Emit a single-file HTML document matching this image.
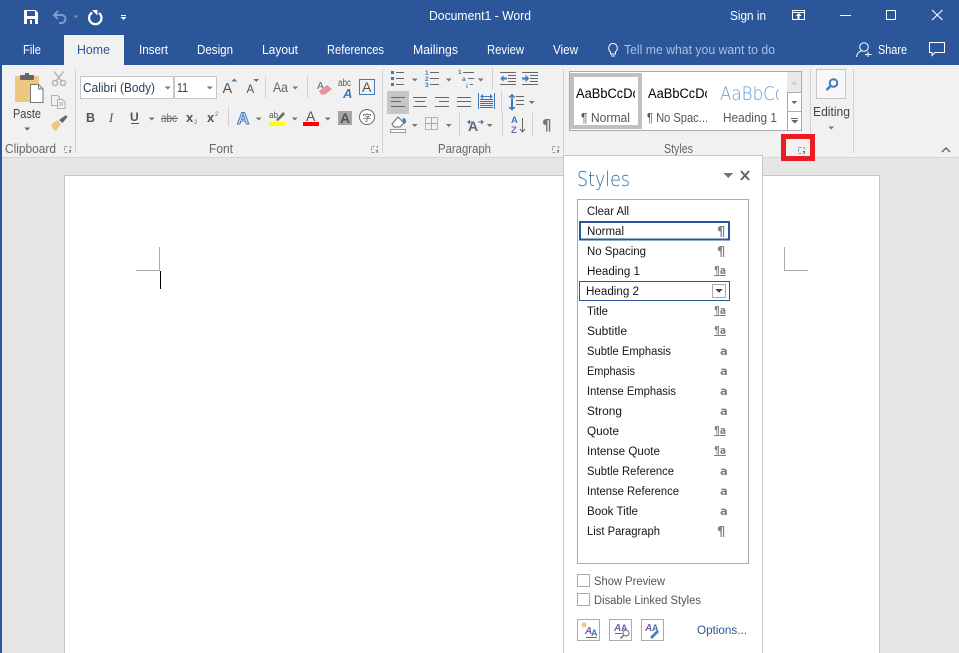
<!DOCTYPE html>
<html><head><meta charset="utf-8"><title>Document1 - Word</title>
<style>
html,body{margin:0;padding:0;width:959px;height:653px;overflow:hidden;background:#e6e6e6}
svg{display:block;position:absolute;left:0;top:0}
text{font-family:"Liberation Sans","DejaVu Sans",sans-serif;font-size:12.5px;fill:#444;white-space:pre}
.w{fill:#fff}.r{fill:#666}.s{fill:#14141f;font-size:11.5px}
.tab{font-size:13px}
.p{fill:#808080;font-size:13px;font-weight:bold;font-family:"DejaVu Sans",sans-serif}
.m{fill:#808080;font-size:11.5px;font-weight:bold;font-family:"DejaVu Sans",sans-serif}
.pa{fill:#808080;font-size:11px;font-weight:bold;font-family:"DejaVu Sans",sans-serif}
</style></head><body>
<svg width="959" height="653" viewBox="0 0 959 653" xmlns="http://www.w3.org/2000/svg" shape-rendering="crispEdges">
<!-- backgrounds -->
<rect width="959" height="653" fill="#e6e6e6"/>
<rect width="959" height="65" fill="#2b579a"/>
<rect y="65" width="2" height="588" fill="#2b579a"/>
<rect x="2" y="65" width="957" height="92" fill="#f1f1f1"/>
<rect x="2" y="157" width="957" height="1" fill="#d6d6d6"/>
<rect x="64" y="35" width="60" height="30" fill="#f1f1f1"/>
<rect x="64.500" y="175.500" width="815" height="490" fill="#fff" stroke="#c6c6c6"/>

<!-- QAT -->
<g shape-rendering="auto">
<path d="M24 10h11.500l2.500 2.500V24H24z" fill="#fff"/>
<rect x="27" y="11" width="8" height="5" fill="#2b579a"/><rect x="27" y="19" width="8" height="5" fill="#2b579a"/><rect x="30" y="20" width="2" height="4" fill="#fff"/>
<path d="M58 11l-4 4 4 4" fill="none" stroke="#7f9bc6" stroke-width="2"/><path d="M54.500 15H61c6 0 6 8 0 8h-2" fill="none" stroke="#7f9bc6" stroke-width="2"/>
<path d="M73 15.500h5.500l-2.750 3z" fill="#6f8dbd"/>
<path d="M99 13a6.200 6.200 0 1 1-6-.8" fill="none" stroke="#fff" stroke-width="2.200"/>
<path d="M90 10h6v7z" fill="#2b579a"/><path d="M93 10.500h5.500V16z" fill="#fff" transform="translate(-1 -.5)"/>
<rect x="121" y="15" width="5" height="1" fill="#fff"/><path d="M120.500 17h6l-3 3z" fill="#fff"/>
</g>
<text x="429" y="20" class="w" textLength="102" lengthAdjust="spacingAndGlyphs">Document1 - Word</text>
<text x="730" y="20" class="w" textLength="36" lengthAdjust="spacingAndGlyphs">Sign in</text>
<!-- window controls -->
<rect x="792.500" y="10.500" width="12" height="9" fill="none" stroke="#fff"/><rect x="792" y="12" width="13" height="1" fill="#fff"/><path d="M798.500 13l-3 3h2v3h2v-3h2z" fill="#fff"/>
<rect x="840" y="15" width="11" height="1" fill="#fff"/>
<rect x="886.500" y="10.500" width="9" height="9" fill="none" stroke="#fff"/>
<path d="M932 10l10.500 10M942.500 10L932 20" stroke="#fff" stroke-width="1.100" shape-rendering="auto"/>

<!-- tabs -->
<text x="23" y="54" class="w tab" textLength="18" lengthAdjust="spacingAndGlyphs">File</text>
<text x="77" y="54" class="tab" style="fill:#2b579a" textLength="33" lengthAdjust="spacingAndGlyphs">Home</text>
<text x="139" y="54" class="w tab" textLength="29" lengthAdjust="spacingAndGlyphs">Insert</text>
<text x="197" y="54" class="w tab" textLength="36" lengthAdjust="spacingAndGlyphs">Design</text>
<text x="262" y="54" class="w tab" textLength="36" lengthAdjust="spacingAndGlyphs">Layout</text>
<text x="327" y="54" class="w tab" textLength="57" lengthAdjust="spacingAndGlyphs">References</text>
<text x="413" y="54" class="w tab" textLength="45" lengthAdjust="spacingAndGlyphs">Mailings</text>
<text x="487" y="54" class="w tab" textLength="37" lengthAdjust="spacingAndGlyphs">Review</text>
<text x="553" y="54" class="w tab" textLength="25" lengthAdjust="spacingAndGlyphs">View</text>
<text x="624" y="54" class="tab" style="fill:#a9bfdf" textLength="151" lengthAdjust="spacingAndGlyphs">Tell me what you want to do</text>
<text x="878" y="54" class="w tab" textLength="29" lengthAdjust="spacingAndGlyphs">Share</text>
<g shape-rendering="auto" fill="none" stroke="#fff">
<path d="M610.500 52c-3.500-3-1.500-8.500 2.500-8.500s6 5.500 2.500 8.500v2h-5zM611 56h4"/>
<circle cx="864" cy="47" r="4.300"/><path d="M856.500 57c.5-3.500 2.500-5.500 5-6"/><path d="M868 51.500v5.500M865 54.500h6.500"/>
<path d="M929.500 42.500h15v10h-9.500l-3 3v-3h-2.500z"/>
</g>

<!-- ribbon separators -->
<g fill="#d0d0d0">
<rect x="75" y="69" width="1" height="84"/><rect x="382" y="69" width="1" height="84"/><rect x="563" y="69" width="1" height="84"/>
<rect x="810" y="69" width="1" height="84"/><rect x="853" y="69" width="1" height="84"/>
<rect x="265" y="76" width="1" height="22"/><rect x="307" y="76" width="1" height="22"/><rect x="228" y="107" width="1" height="19"/>
<rect x="492" y="68" width="1" height="22"/><rect x="501" y="91" width="1" height="22"/><rect x="459" y="113" width="1" height="23"/><rect x="502" y="113" width="1" height="23"/><rect x="532" y="113" width="1" height="23"/>
</g>

<!-- clipboard -->
<g shape-rendering="auto">
<rect x="15" y="76" width="24" height="26" rx="1" fill="#edc77f"/>
<rect x="20" y="75" width="14" height="5" rx="1" fill="#666"/><rect x="25" y="73" width="4" height="3" fill="#666"/>
<path d="M30.500 84.500h8l4.500 4.500v13.500H30.500z" fill="#fff" stroke="#777"/><path d="M38.500 84.500V89H43" fill="none" stroke="#777"/>
<circle cx="55" cy="83" r="2.600" fill="none" stroke="#b0b0b0" stroke-width="1.400"/><circle cx="63" cy="83" r="2.600" fill="none" stroke="#b0b0b0" stroke-width="1.400"/><path d="M54 71.500l7 9M63.500 71.500l-7 9" stroke="#b0b0b0" stroke-width="1.400"/>
<path d="M51.500 95.500h6l2 2v8h-8z" fill="#f1f1f1" stroke="#b0b0b0"/><path d="M57.500 99.500h5l2.500 2.500v6.500h-7.500z" fill="#f1f1f1" stroke="#b0b0b0"/><path d="M59 103h4M59 105h4" stroke="#b0b0b0"/>
<path d="M51 125l6-5 4 4-5 7c-2-.5-4-3-5-6z" fill="#edc77f"/><path d="M59 120l7-5 1.500 2-5 6z" fill="#666"/>
</g>
<text x="13" y="118" textLength="28" lengthAdjust="spacingAndGlyphs">Paste</text>
<path d="M24 127.500h6l-3 3z" fill="#666"/>
<text x="5" y="153" class="r" textLength="51" lengthAdjust="spacingAndGlyphs">Clipboard</text>
<rect x="64.500" y="146.500" width="6" height="6" fill="none" stroke="#999" stroke-dasharray="3 2"/><path d="M67 149l4 4v-3h-3z" fill="#777"/>

<!-- font row 1 -->
<rect x="80.500" y="76.500" width="93" height="22" fill="#fff" stroke="#c6c6c6"/>
<rect x="174.500" y="76.500" width="42" height="22" fill="#fff" stroke="#c6c6c6"/>
<text x="83" y="92" style="fill:#2b3e58" textLength="72" lengthAdjust="spacingAndGlyphs">Calibri (Body)</text>
<text x="177" y="92" style="fill:#2b3e58" textLength="11" lengthAdjust="spacingAndGlyphs">11</text>
<path d="M164.500 86.500h6l-3 3zM206.500 86.500h6l-3 3zM292 86.500h6l-3 3z" fill="#777"/>
<text x="222.500" y="93" style="font-size:14.500px;fill:#555">A</text><path d="M231 81.500h6l-3-3z" fill="#4a7ebb"/>
<text x="246.500" y="93" style="font-size:11.500px;fill:#555">A</text><path d="M253 79h6l-3 3z" fill="#4a7ebb"/>
<text x="273" y="92" style="fill:#666;font-size:14px" textLength="15" lengthAdjust="spacingAndGlyphs">Aa</text>
<g shape-rendering="auto">
<text x="317" y="89" style="font-size:10.500px;fill:#666">A</text><path d="M319 91l8-6 5 4-7 5.500h-4z" fill="#e8919f"/>
<text x="338" y="86" style="font-size:10px;fill:#555" textLength="13" lengthAdjust="spacingAndGlyphs">abc</text><text x="343" y="98" style="font-size:13px;font-weight:bold;font-style:italic;fill:#3f7cba">A</text>
</g>
<rect x="359.500" y="79.500" width="15" height="15" fill="none" stroke="#3f7cba"/>
<text x="362" y="92" style="font-size:14px;fill:#555">A</text>
<!-- font row 2 -->
<text x="86" y="122" style="font-weight:bold;fill:#555;font-size:12.500px">B</text>
<text x="109" y="122" style="font-style:italic;fill:#555;font-size:13px;font-family:'Liberation Serif',serif">I</text>
<text x="130" y="121" style="font-weight:bold;fill:#555;font-size:12px">U</text><rect x="131" y="123" width="8" height="1" fill="#555"/>
<path d="M148.500 117.500h6l-3 3zM255.500 117.500h6l-3 3zM291.500 117.500h6l-3 3zM324.500 117.500h6l-3 3z" fill="#777"/>
<text x="161" y="122" style="fill:#666;font-size:12px" textLength="16" lengthAdjust="spacingAndGlyphs">abc</text><rect x="161" y="118" width="17" height="1" fill="#666"/>
<text x="186" y="122" style="font-weight:bold;fill:#555;font-size:13px">x</text><text x="194" y="124" style="fill:#3f7cba;font-size:6px">2</text>
<text x="207" y="122" style="font-weight:bold;fill:#555;font-size:13px">x</text><text x="215" y="116" style="fill:#3f7cba;font-size:6px">2</text>
<text x="237" y="124" style="font-size:17px;font-weight:bold;fill:#dbe7f4;stroke:#3f7cba;stroke-width:1">A</text>
<text x="269" y="118" style="font-size:9px;fill:#555" textLength="9" lengthAdjust="spacingAndGlyphs">ab</text><path d="M276 120l7-8 2 2-7 7z" fill="#666" shape-rendering="auto"/><rect x="269" y="122" width="16" height="4" fill="#ffff00"/>
<text x="306" y="121" style="font-size:14px;fill:#555">A</text><rect x="303" y="122" width="16" height="4" fill="#ff0000"/>
<rect x="338" y="111" width="14" height="14" fill="#a6a6a6"/><text x="340" y="123" style="font-size:14px;font-weight:bold;fill:#555">A</text>
<circle cx="367" cy="117" r="7.500" fill="#fff" stroke="#666" shape-rendering="auto"/><text x="362.500" y="121" style="font-size:9px;fill:#555;font-family:'Noto Sans CJK SC',sans-serif">字</text>
<text x="209" y="153" class="r" textLength="24" lengthAdjust="spacingAndGlyphs">Font</text>
<rect x="371.500" y="146.500" width="6" height="6" fill="none" stroke="#999" stroke-dasharray="3 2"/><path d="M374 149l4 4v-3h-3z" fill="#777"/>

<!-- paragraph row 1 -->
<g fill="#666">
<rect x="391" y="71" width="3" height="3" fill="#3f7cba"/><rect x="391" y="77" width="3" height="3" fill="#3f7cba"/><rect x="391" y="83" width="3" height="3" fill="#3f7cba"/>
<rect x="396" y="72" width="8" height="1"/><rect x="396" y="78" width="8" height="1"/><rect x="396" y="84" width="8" height="1"/>
<rect x="430" y="72" width="9" height="1"/><rect x="430" y="78" width="9" height="1"/><rect x="430" y="84" width="9" height="1"/>
<rect x="463" y="72" width="11" height="1"/><rect x="468" y="78" width="6" height="1"/><rect x="470" y="84" width="3" height="1"/>
<path d="M412 78.500h5.500l-2.750 3zM446 78.500h5.500l-2.750 3zM478 78.500h5.500l-2.750 3zM529 101h5.500l-2.750 3zM412 124h5.500l-2.750 3zM446 124h5.500l-2.750 3zM487 124h5.500l-2.750 3z" fill="#777"/>
</g>
<text x="425" y="75" style="font-size:6.500px;fill:#3f7cba;font-weight:bold">1</text><text x="425" y="81" style="font-size:6.500px;fill:#3f7cba;font-weight:bold">2</text><text x="425" y="87" style="font-size:6.500px;fill:#3f7cba;font-weight:bold">3</text>
<text x="458" y="74" style="font-size:6.500px;fill:#3f7cba;font-weight:bold">1</text><text x="462" y="81" style="font-size:6.500px;fill:#3f7cba;font-weight:bold">a</text><text x="466" y="88" style="font-size:6.500px;fill:#3f7cba;font-weight:bold">i</text>
<g fill="#666">
<rect x="500" y="72" width="16" height="1"/><rect x="508" y="75" width="8" height="1"/><rect x="508" y="78" width="8" height="1"/><rect x="508" y="81" width="8" height="1"/><rect x="500" y="84" width="16" height="1"/>
<rect x="522" y="72" width="16" height="1"/><rect x="530" y="75" width="8" height="1"/><rect x="530" y="78" width="8" height="1"/><rect x="530" y="81" width="8" height="1"/><rect x="522" y="84" width="16" height="1"/>
</g>
<path d="M500 78.500l3.500-3.500v2.500h3.500v2H503.500v2.500z" fill="#3f7cba"/>
<path d="M529 78.500l-3.500-3.500v2.500H522v2h3.500v2.500z" fill="#3f7cba"/>
<!-- paragraph row 2 -->
<rect x="387" y="91" width="22" height="23" fill="#c6c6c6"/>
<g fill="#666">
<rect x="391" y="97" width="14" height="1"/><rect x="391" y="101" width="10" height="1"/><rect x="391" y="106" width="14" height="1"/>
<rect x="413" y="97" width="14" height="1"/><rect x="415" y="101" width="10" height="1"/><rect x="413" y="106" width="14" height="1"/>
<rect x="435" y="97" width="14" height="1"/><rect x="439" y="101" width="10" height="1"/><rect x="435" y="106" width="14" height="1"/>
<rect x="457" y="97" width="14" height="1"/><rect x="457" y="101" width="14" height="1"/><rect x="457" y="106" width="14" height="1"/>
<rect x="480" y="99" width="13" height="1"/><rect x="480" y="101" width="13" height="1"/><rect x="480" y="103" width="13" height="1"/><rect x="480" y="105" width="13" height="1"/><rect x="480" y="107" width="13" height="1"/>
<rect x="516" y="96" width="8" height="1"/><rect x="516" y="100" width="8" height="1"/><rect x="516" y="104" width="8" height="1"/>
</g>
<rect x="478" y="93" width="1" height="16" fill="#3f7cba"/><rect x="494" y="93" width="1" height="16" fill="#3f7cba"/>
<path d="M483 96h7v1h-7zM480 96.500l3-2.500v5zM493 96.500l-3-2.500v5z" fill="#3f7cba"/>
<path d="M511 97h2v11h-2zM512 93.500l-3.500 4h7zM512 111l-3.500-4h7z" fill="#3f7cba"/>
<!-- paragraph row 3 -->
<g shape-rendering="auto">
<path d="M392 124l6-7 6 6-4 4h-6z" fill="#fff" stroke="#666"/><path d="M403 118c3 0 4 3 2 6-2-2-3-4-2-6z" fill="#3f7cba"/>
</g>
<rect x="390.500" y="129.500" width="15" height="3" fill="#fff" stroke="#999"/>
<rect x="425.500" y="117.500" width="12" height="12" fill="none" stroke="#777" stroke-dasharray="1 1"/><rect x="431" y="118" width="1" height="12" fill="#aaa" /><rect x="425" y="123" width="13" height="1" fill="#aaa"/>
<g shape-rendering="auto"><text x="468" y="131" style="font-size:14px;font-weight:bold;fill:#666">A</text>
<path d="M467 122l3-2.500v5zM470 121.500h3v1h-3zM484 122l-3-2.500v5zM478 121.500h3v1h-3z" fill="#3f7cba"/></g>
<text x="511" y="123" style="font-size:9.500px;font-weight:bold;fill:#3f7cba">A</text><text x="511" y="133" style="font-size:9.500px;font-weight:bold;fill:#8064a2">Z</text>
<path d="M522.500 118v14M520 129l2.500 3 2.500-3" stroke="#666" fill="none" shape-rendering="auto"/>
<text x="542" y="130" style="font-size:15px;font-weight:bold;fill:#777;font-family:'DejaVu Sans',sans-serif">¶</text>
<text x="438" y="153" class="r" textLength="53" lengthAdjust="spacingAndGlyphs">Paragraph</text>
<rect x="552.500" y="146.500" width="6" height="6" fill="none" stroke="#999" stroke-dasharray="3 2"/><path d="M555 149l4 4v-3h-3z" fill="#777"/>

<!-- styles gallery -->
<rect x="569.500" y="71.500" width="232" height="59" fill="#fff" stroke="#ababab"/>
<rect x="572" y="75" width="68" height="52" fill="#fff" stroke="#c0c0c0" stroke-width="4"/>
<svg x="576" y="80" width="59" height="26"><text x="0" y="18" style="font-size:13.500px;fill:#000" textLength="63" lengthAdjust="spacingAndGlyphs">AaBbCcDc</text></svg>
<svg x="648" y="80" width="59" height="26"><text x="0" y="18" style="font-size:13.500px;fill:#000" textLength="63" lengthAdjust="spacingAndGlyphs">AaBbCcDc</text></svg>
<svg x="720" y="78" width="59" height="30"><text x="0" y="22" style="font-size:19px;fill:#5b9bd5;font-family:'DejaVu Sans',sans-serif;font-weight:200" textLength="64" lengthAdjust="spacingAndGlyphs">AaBbCc</text></svg>
<text x="581" y="122" style="fill:#555;font-size:13px" textLength="49" lengthAdjust="spacingAndGlyphs">¶ Normal</text>
<text x="647" y="122" style="fill:#555;font-size:13px" textLength="61" lengthAdjust="spacingAndGlyphs">¶ No Spac...</text>
<text x="723" y="122" style="fill:#555;font-size:13px" textLength="54" lengthAdjust="spacingAndGlyphs">Heading 1</text>
<rect x="787" y="72" width="14" height="20" fill="#e9e9e9"/>
<rect x="801" y="71" width="1" height="60" fill="#ababab"/>
<rect x="787" y="92" width="1" height="38" fill="#ababab"/>
<rect x="787" y="92" width="14" height="1" fill="#ababab"/><rect x="787" y="111" width="14" height="1" fill="#ababab"/>
<path d="M791 84.500h6l-3-3z" fill="#c6c6c6"/><path d="M791 101h6l-3 3z" fill="#666"/><rect x="791" y="118" width="7" height="1" fill="#666"/><path d="M791 120h7l-3.500 3.500z" fill="#666"/>
<text x="664" y="153" class="r" textLength="29" lengthAdjust="spacingAndGlyphs">Styles</text>
<rect x="798.500" y="147.500" width="6" height="6" fill="none" stroke="#999" stroke-dasharray="3 2"/><path d="M801 150l4 4v-3h-3z" fill="#666"/>
<!-- red box -->
<rect x="783.500" y="136.500" width="29" height="22" fill="none" stroke="#ed1c24" stroke-width="5"/>

<!-- editing -->
<rect x="816.500" y="69.500" width="29" height="29" fill="#f7f7f7" stroke="#c6c6c6"/>
<g shape-rendering="auto"><circle cx="833.500" cy="83" r="3.800" fill="none" stroke="#3f7cba" stroke-width="2"/><path d="M830.500 86l-4 4" stroke="#3f7cba" stroke-width="2.500"/></g>
<text x="813" y="116" style="font-size:13px" textLength="37" lengthAdjust="spacingAndGlyphs">Editing</text>
<path d="M828 126.500h6l-3 3z" fill="#777"/>
<path d="M942 152l4-4 4 4" fill="none" stroke="#666" stroke-width="1.500" shape-rendering="auto"/>

<!-- crop marks -->
<rect x="136" y="270" width="24" height="1" fill="#a9a9a9"/><rect x="159" y="247" width="1" height="23" fill="#a9a9a9"/>
<rect x="160" y="271" width="1" height="18" fill="#000"/>
<rect x="784" y="247" width="1" height="23" fill="#a9a9a9"/><rect x="784" y="270" width="24" height="1" fill="#a9a9a9"/>

<!-- pane -->
<rect x="563.500" y="155.500" width="199" height="510" fill="#fff" stroke="#c6c6c6"/>
<text x="577" y="186" style="font-size:20px;fill:#2f6bab;font-family:'DejaVu Sans',sans-serif;font-weight:200" textLength="53" lengthAdjust="spacingAndGlyphs">Styles</text>
<path d="M723 173h10l-5 5z" fill="#777"/>
<path d="M741 171l8 9M749 171l-8 9" stroke="#666" stroke-width="2" shape-rendering="auto"/>
<rect x="577.500" y="199.500" width="171" height="364" fill="#fff" stroke="#ababab"/>
<rect x="580" y="222" width="149" height="17.500" fill="#fff" stroke="#2b579a" stroke-width="2"/>
<rect x="579.500" y="281.500" width="150" height="19" fill="#fff" stroke="#2b579a"/>
<rect x="712.500" y="284.500" width="13" height="13" fill="#fff" stroke="#aaa"/><path d="M715.500 289h7l-3.500 4z" fill="#444"/>
<text x="587" y="215" class="s" textLength="42" lengthAdjust="spacingAndGlyphs">Clear All</text>
<text x="587" y="235" class="s" textLength="37" lengthAdjust="spacingAndGlyphs">Normal</text>
<text x="587" y="255" class="s" textLength="59" lengthAdjust="spacingAndGlyphs">No Spacing</text>
<text x="587" y="275" class="s" textLength="53" lengthAdjust="spacingAndGlyphs">Heading 1</text>
<text x="586" y="295" class="s" textLength="53" lengthAdjust="spacingAndGlyphs">Heading 2</text>
<text x="587" y="315" class="s" textLength="21" lengthAdjust="spacingAndGlyphs">Title</text>
<text x="587" y="335" class="s" textLength="40" lengthAdjust="spacingAndGlyphs">Subtitle</text>
<text x="587" y="355" class="s" textLength="84" lengthAdjust="spacingAndGlyphs">Subtle Emphasis</text>
<text x="587" y="375" class="s" textLength="48" lengthAdjust="spacingAndGlyphs">Emphasis</text>
<text x="587" y="395" class="s" textLength="89" lengthAdjust="spacingAndGlyphs">Intense Emphasis</text>
<text x="587" y="415" class="s" textLength="35" lengthAdjust="spacingAndGlyphs">Strong</text>
<text x="587" y="435" class="s" textLength="32" lengthAdjust="spacingAndGlyphs">Quote</text>
<text x="587" y="455" class="s" textLength="73" lengthAdjust="spacingAndGlyphs">Intense Quote</text>
<text x="587" y="475" class="s" textLength="87" lengthAdjust="spacingAndGlyphs">Subtle Reference</text>
<text x="587" y="495" class="s" textLength="92" lengthAdjust="spacingAndGlyphs">Intense Reference</text>
<text x="587" y="515" class="s" textLength="51" lengthAdjust="spacingAndGlyphs">Book Title</text>
<text x="587" y="535" class="s" textLength="73" lengthAdjust="spacingAndGlyphs">List Paragraph</text>
<!-- type marks -->
<text x="717" y="236" class="p">¶</text>
<text x="717" y="256" class="p">¶</text>
<text x="714" y="274" class="pa" textLength="12" lengthAdjust="spacingAndGlyphs">¶a</text><rect x="714" y="275" width="12" height="1" fill="#808080"/>
<text x="714" y="314" class="pa" textLength="12" lengthAdjust="spacingAndGlyphs">¶a</text><rect x="714" y="315" width="12" height="1" fill="#808080"/>
<text x="714" y="334" class="pa" textLength="12" lengthAdjust="spacingAndGlyphs">¶a</text><rect x="714" y="335" width="12" height="1" fill="#808080"/>
<text x="720" y="355" class="m">a</text><text x="720" y="375" class="m">a</text><text x="720" y="395" class="m">a</text><text x="720" y="415" class="m">a</text>
<text x="714" y="434" class="pa" textLength="12" lengthAdjust="spacingAndGlyphs">¶a</text><rect x="714" y="435" width="12" height="1" fill="#808080"/>
<text x="714" y="454" class="pa" textLength="12" lengthAdjust="spacingAndGlyphs">¶a</text><rect x="714" y="455" width="12" height="1" fill="#808080"/>
<text x="720" y="475" class="m">a</text><text x="720" y="495" class="m">a</text><text x="720" y="515" class="m">a</text>
<text x="717" y="536" class="p">¶</text>
<!-- options -->
<rect x="577.500" y="574.500" width="12" height="12" fill="#fff" stroke="#ababab"/>
<rect x="577.500" y="593.500" width="12" height="12" fill="#fff" stroke="#ababab"/>
<text x="594" y="585" style="font-size:11.500px;fill:#555" textLength="71" lengthAdjust="spacingAndGlyphs">Show Preview</text>
<text x="594" y="604" style="font-size:11.500px;fill:#555" textLength="107" lengthAdjust="spacingAndGlyphs">Disable Linked Styles</text>
<rect x="577.500" y="619.500" width="22" height="21" fill="#fff" stroke="#ababab"/>
<rect x="609.500" y="619.500" width="22" height="21" fill="#fff" stroke="#ababab"/>
<rect x="641.500" y="619.500" width="22" height="21" fill="#fff" stroke="#ababab"/>
<g shape-rendering="auto">
<circle cx="584" cy="625" r="2.500" fill="#edc77f"/>
<text x="585" y="634" style="font-size:10px;font-weight:bold;font-style:italic;fill:#7a5aa6">A</text><text x="591" y="636" style="font-size:9px;font-weight:bold;fill:#3f6fb0">A</text><rect x="586" y="637" width="11" height="1" fill="#3f6fb0"/>
<text x="614" y="631" style="font-size:10px;font-weight:bold;font-style:italic;fill:#7a5aa6">A</text><text x="621" y="631" style="font-size:9px;font-weight:bold;fill:#3f6fb0">A</text><rect x="615" y="633" width="7" height="1" fill="#3f6fb0"/>
<circle cx="626" cy="633" r="3" fill="#fff" stroke="#666"/><path d="M623.500 635.500l-3 3" stroke="#666" stroke-width="1.500"/>
<text x="645" y="631" style="font-size:10px;font-weight:bold;font-style:italic;fill:#7a5aa6">A</text><text x="652" y="631" style="font-size:9px;font-weight:bold;fill:#3f6fb0">A</text>
<path d="M650 637l7-7 2 2-7 7z" fill="#4a7ebb"/>
</g>
<text x="697" y="634" style="font-size:11.500px;fill:#2b579a" textLength="50" lengthAdjust="spacingAndGlyphs">Options...</text>
</svg>
</body></html>
